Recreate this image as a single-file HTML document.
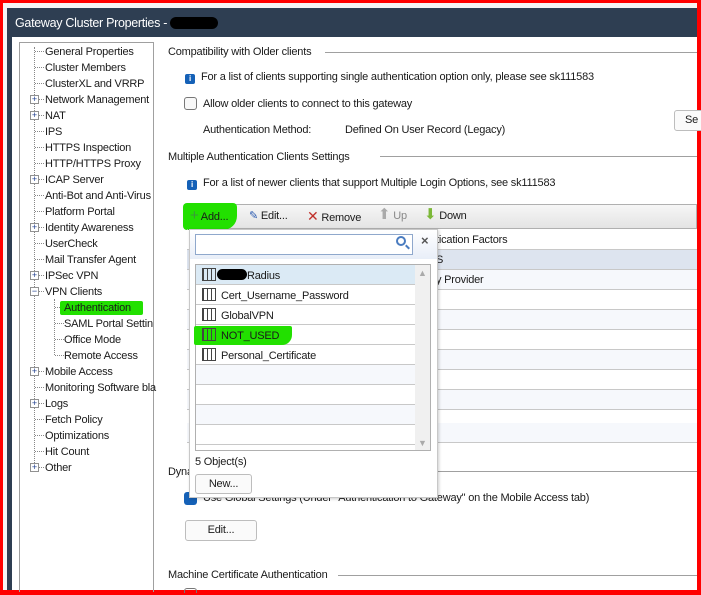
<!DOCTYPE html>
<html><head><meta charset="utf-8"><style>
*{margin:0;padding:0;box-sizing:border-box}
body{width:701px;height:595px;overflow:hidden;background:#fff;font-family:"Liberation Sans",sans-serif;font-size:11px;letter-spacing:-0.2px;color:#1a1a1a;position:relative}
.a{position:absolute;white-space:nowrap}
.t{position:absolute;white-space:nowrap;line-height:14px}
.pl{position:absolute;width:9px;height:9px;border:1px solid #919191;background:#fff;font-size:9px;line-height:7px;text-align:center;color:#1f3f8f;letter-spacing:0}
.dh{position:absolute;height:1px;border-top:1px dotted #888;width:9px}
.info{display:inline-block;width:10px;height:10px;background:#1561b7;color:#fff;font-size:8px;font-weight:bold;line-height:10px;text-align:center;border-radius:2px;margin-right:6px;vertical-align:-1px}
.row{position:absolute;height:20px;border-bottom:1px solid #c8c8c8}
.ic{display:inline-block;width:14px;height:13px;vertical-align:-2px;margin-right:5px;background:
repeating-linear-gradient(90deg,#444 0 1px,transparent 1px 4px);border:1px solid #444;position:relative}
.btn{position:absolute;border:1px solid #bdbdbd;border-radius:3px;background:#fafafa;text-align:center;line-height:18px}
</style></head><body>
<div class="a" style="left:0;top:0;width:701px;height:595px;border:3px solid #f00;border-right-width:4px;border-bottom-width:5px;background:#f5f5f5"></div>
<div class="a" style="left:7px;top:8px;width:690px;height:582px;background:#2e3e52"></div>
<div class="a" style="left:12px;top:37px;width:685px;height:553px;background:#fff"></div>
<div class="t" style="left:15px;top:16px;font-size:12.5px;letter-spacing:-0.3px;color:#fff">Gateway Cluster Properties - <span style="display:inline-block;width:48px;height:12px;background:#000;border-radius:6px;vertical-align:-2px"></span></div>
<div class="a" style="left:19px;top:42px;width:135px;height:550px;border:1px solid #a0a0a0;border-bottom:none"></div>
<div class="a" style="left:34px;top:47px;height:420px;border-left:1px dotted #888"></div>
<div class="a" style="left:54px;top:299px;height:56px;border-left:1px dotted #888"></div>
<div id="tree"></div>
<script>
var items=[["General Properties",0],["Cluster Members",0],["ClusterXL and VRRP",0],["Network Management",1],["NAT",1],["IPS",0],["HTTPS Inspection",0],["HTTP/HTTPS Proxy",0],["ICAP Server",1],["Anti-Bot and Anti-Virus",0],["Platform Portal",0],["Identity Awareness",1],["UserCheck",0],["Mail Transfer Agent",0],["IPSec VPN",1],["VPN Clients",2],["Authentication",3],["SAML Portal Settin",3],["Office Mode",3],["Remote Access",3],["Mobile Access",1],["Monitoring Software bla",0],["Logs",1],["Fetch Policy",0],["Optimizations",0],["Hit Count",0],["Other",1]];
var h="";
items.forEach(function(it,i){var y=51+16*i;var sub=it[1]==3;
var x=sub?64:45;
if(sub){h+='<div class="dh" style="left:55px;top:'+y+'px"></div>';}
else{h+='<div class="dh" style="left:35px;top:'+y+'px"></div>';}
if(it[1]==1||it[1]==2){h+='<div class="pl" style="left:30px;top:'+(y-4)+'px">'+(it[1]==1?'+':'−')+'</div>';}
var bg=(i==16)?'background:#22e000;padding:0 12px 0 4px;margin-left:-4px;border-radius:2px;':'';
h+='<div class="t" style="left:'+x+'px;top:'+(y-6)+'px;'+bg+'">'+it[0]+'</div>';});
document.getElementById('tree').innerHTML=h;
</script>
<div class="t" style="left:168px;top:45px">Compatibility with Older clients</div>
<div class="a" style="left:325px;top:52px;width:372px;border-top:1px solid #a0a0a0"></div>
<div class="t" style="left:185px;top:70px"><span class="info">i</span>For a list of clients supporting single authentication option only, please see sk111583</div>
<div class="a" style="left:184px;top:97px;width:13px;height:13px;border:1px solid #777;border-radius:3px;background:#f8f8f8"></div>
<div class="t" style="left:203px;top:97px">Allow older clients to connect to this gateway</div>
<div class="t" style="left:203px;top:123px">Authentication Method:</div>
<div class="t" style="left:345px;top:123px">Defined On User Record (Legacy)</div>
<div class="btn" style="left:674px;top:110px;width:30px;height:21px;text-align:left;padding-left:10px">Se</div>
<div class="t" style="left:168px;top:150px">Multiple Authentication Clients Settings</div>
<div class="a" style="left:380px;top:156px;width:317px;border-top:1px solid #a0a0a0"></div>
<div class="t" style="left:187px;top:176px"><span class="info">i</span>For a list of newer clients that support Multiple Login Options, see sk111583</div>
<div class="a" style="left:185px;top:204px;width:512px;height:25px;border:1px solid #b0b0b0;background:linear-gradient(#f6f6f6,#e4e4e4)"></div>
<div class="a" style="left:183px;top:203px;width:54px;height:27px;background:#22e000;border-radius:4px 4px 14px 4px"></div>
<div class="t" style="left:190px;top:209px"><span style="color:#3a9a3a;font-size:15px">+</span> Add...</div>
<div class="t" style="left:249px;top:209px"><span style="color:#2a5ab0">✎</span> Edit...</div>
<div class="t" style="left:307px;top:209px"><span style="color:#c0302a;font-size:14px">✕</span> Remove</div>
<div class="t" style="left:378px;top:208px"><span style="color:#aaa;font-size:15px">⬆</span> <span style="color:#888">Up</span></div>
<div class="t" style="left:424px;top:208px"><span style="color:#7cb838;font-size:15px">⬇</span> Down</div>
<div class="a" style="left:187px;top:229px;width:510px;height:214px;border-left:1px solid #b0b0b0;border-bottom:1px solid #b0b0b0"></div>
<div class="row" style="left:187px;top:230px;width:510px;background:#fff"></div>
<div class="t" style="left:436px;top:233px">tication Factors</div>
<div class="row" style="left:187px;top:250px;width:510px;background:#dde4ef"></div>
<div class="t" style="left:436px;top:253px">S</div>
<div class="row" style="left:187px;top:270px;width:510px;background:#f6f8fc"></div>
<div class="t" style="left:436px;top:273px">y Provider</div>
<div class="row" style="left:187px;top:290px;width:510px;background:#fff"></div>
<div class="row" style="left:187px;top:310px;width:510px;background:#f6f8fc"></div>
<div class="row" style="left:187px;top:330px;width:510px;background:#fff"></div>
<div class="row" style="left:187px;top:350px;width:510px;background:#f6f8fc"></div>
<div class="row" style="left:187px;top:370px;width:510px;background:#fff"></div>
<div class="row" style="left:187px;top:390px;width:510px;background:#f6f8fc"></div>
<div class="row" style="left:187px;top:410px;width:510px;background:#fff"></div>
<div class="row" style="left:187px;top:423px;width:510px;height:20px;background:#f6f8fc"></div>
<div class="t" style="left:168px;top:465px">Dyna</div>
<div class="a" style="left:437px;top:471px;width:260px;border-top:1px solid #a0a0a0"></div>
<div class="a" style="left:184px;top:492px;width:13px;height:13px;background:#1561b7;border-radius:3px"></div>
<div class="t" style="left:203px;top:491px">Use Global Settings (Under "Authentication to Gateway" on the Mobile Access tab)</div>
<div class="btn" style="left:185px;top:520px;width:72px;height:21px">Edit...</div>
<div class="t" style="left:168px;top:568px">Machine Certificate Authentication</div>
<div class="a" style="left:338px;top:575px;width:359px;border-top:1px solid #a0a0a0"></div>
<div class="a" style="left:184px;top:588px;width:13px;height:5px;border:1px solid #777;border-bottom:none;border-radius:3px 3px 0 0"></div>
<div class="a" style="left:189px;top:229px;width:249px;height:269px;background:#fff;border:1px solid #c8c8c8;box-shadow:1px 1px 3px rgba(0,0,0,.2)"></div>
<div class="a" style="left:190px;top:230px;width:247px;height:29px;background:linear-gradient(#fff,#e8eef8)"></div>
<div class="a" style="left:195px;top:234px;width:218px;height:21px;border:1px solid #8fa8cc;background:#fff"></div>
<div class="a" style="left:396px;top:236px;width:10px;height:10px;border:2px solid #4a7cc0;border-radius:50%"></div>
<div class="a" style="left:405px;top:246px;width:5px;height:2px;background:#4a7cc0;transform:rotate(45deg)"></div>
<div class="t" style="left:421px;top:234px;font-weight:bold;color:#555;font-size:13px">×</div>
<div class="a" style="left:195px;top:264px;width:236px;height:187px;border:1px solid #b0b0b0;background:#fff"></div>
<div class="a" style="left:415px;top:265px;width:15px;height:185px;background:#f0f0f0"></div>
<div class="t" style="left:418px;top:266px;color:#aaa;font-size:9px">▲</div>
<div class="t" style="left:418px;top:436px;color:#aaa;font-size:9px">▼</div>
<div class="row" style="left:196px;top:265px;width:219px;background:#dbeaf5"></div>
<div class="row" style="left:196px;top:285px;width:219px"></div>
<div class="row" style="left:196px;top:305px;width:219px"></div>
<div class="row" style="left:196px;top:325px;width:219px"></div>
<div class="row" style="left:196px;top:345px;width:219px"></div>
<div class="row" style="left:196px;top:365px;width:219px;background:#f6f8fc"></div>
<div class="row" style="left:196px;top:385px;width:219px"></div>
<div class="row" style="left:196px;top:405px;width:219px;background:#f6f8fc"></div>
<div class="row" style="left:196px;top:425px;width:219px"></div>
<div class="a" style="left:194px;top:326px;width:98px;height:19px;background:#22e000;border-radius:2px 2px 10px 2px"></div>
<div class="t" style="left:202px;top:268px"><span class="ic"></span><span style="display:inline-block;width:30px;height:11px;background:#000;border-radius:6px;vertical-align:-1px;margin-left:-4px"></span>Radius</div>
<div class="t" style="left:202px;top:288px"><span class="ic"></span>Cert_Username_Password</div>
<div class="t" style="left:202px;top:308px"><span class="ic"></span>GlobalVPN</div>
<div class="t" style="left:202px;top:328px"><span class="ic"></span>NOT_USED</div>
<div class="t" style="left:202px;top:348px"><span class="ic"></span>Personal_Certificate</div>
<div class="t" style="left:195px;top:455px">5 Object(s)</div>
<div class="btn" style="left:195px;top:474px;width:57px;height:20px">New...</div>
</body></html>
